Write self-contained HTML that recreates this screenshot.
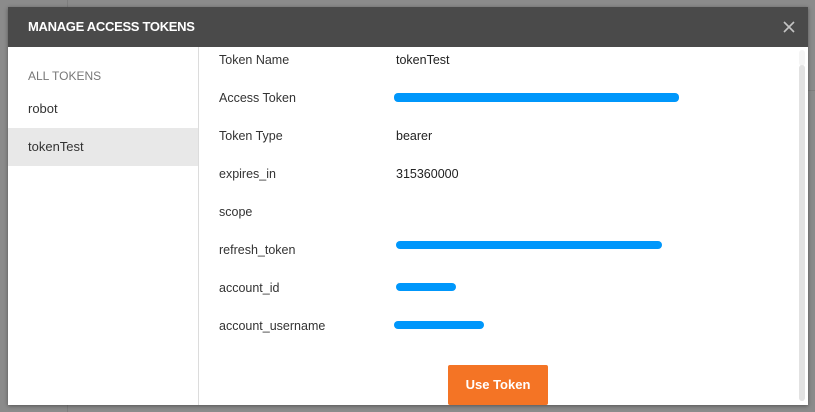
<!DOCTYPE html>
<html><head><style>
body{margin:0;width:815px;height:412px;background:#8b8b8b;position:relative;overflow:hidden;font-family:"Liberation Sans",sans-serif;}
.bgline{position:absolute;background:#7e7e7e}
.modal{position:absolute;left:8px;top:7px;width:800px;height:398px;background:#fff;box-shadow:0 1px 4px rgba(0,0,0,.4)}
.hdr{position:absolute;left:0;top:0;width:800px;height:40px;background:#4a4a4a;color:#fff;font-size:13px;font-weight:bold;line-height:40px;padding-left:20px;box-sizing:border-box;letter-spacing:-0.3px}
.x{position:absolute;right:13px;top:14px}
.side{position:absolute;left:0;top:40px;width:190px;height:358px;border-right:1px solid #dcdcdc}
.s{position:absolute;left:20px;font-size:13px;color:#333}
.sel{position:absolute;left:0;top:81px;width:190px;height:38px;background:#e8e8e8}
.l{position:absolute;left:211px;font-size:12.5px;color:#333}
.v{position:absolute;left:388px;font-size:12.5px;color:#222}
.bar{position:absolute;background:#0097fb;height:8px;border-radius:4px}
.btn{position:absolute;left:440px;top:358px;width:100px;height:40px;background:#f47425;border-radius:2px;color:#fff;font-size:13px;font-weight:bold;text-align:center;line-height:40px}
.sb{position:absolute;left:791px;top:58px;width:6px;height:336px;background:#e2e2e2;border-radius:3px}
.sbt{position:absolute;left:791px;top:43px;width:6px;height:16px;background:#f4f4f4;border-radius:3px}
</style></head><body>
<div class="bgline" style="left:67px;top:0;width:1px;height:412px"></div>
<div class="bgline" style="left:808px;top:90px;width:7px;height:1px"></div>
<div class="modal">
<div class="hdr">MANAGE ACCESS TOKENS<svg class="x" width="12" height="12" viewBox="0 0 12 12"><path d="M1 1L11 11M11 1L1 11" stroke="#c4c4c4" stroke-width="1.6"/></svg></div>
<div class="side">
<div class="sel"></div>
<div class="s" style="top:22px;color:#777;font-size:12px">ALL TOKENS</div>
<div class="s" style="top:54px">robot</div>
<div class="s" style="top:92px">tokenTest</div>
</div>
<div class="l" style="top:46px">Token Name</div><div class="v" style="top:46px">tokenTest</div>
<div class="l" style="top:84px">Access Token</div><div class="bar" style="left:386px;top:86px;width:285px;height:9px"></div>
<div class="l" style="top:122px">Token Type</div><div class="v" style="top:122px">bearer</div>
<div class="l" style="top:160px">expires_in</div><div class="v" style="top:160px">315360000</div>
<div class="l" style="top:198px">scope</div>
<div class="l" style="top:236px">refresh_token</div><div class="bar" style="left:388px;top:234px;width:266px"></div>
<div class="l" style="top:274px">account_id</div><div class="bar" style="left:388px;top:276px;width:60px"></div>
<div class="l" style="top:312px">account_username</div><div class="bar" style="left:386px;top:314px;width:90px"></div>
<div class="btn">Use Token</div>
<div class="sbt"></div><div class="sb"></div>
</div>
</body></html>
